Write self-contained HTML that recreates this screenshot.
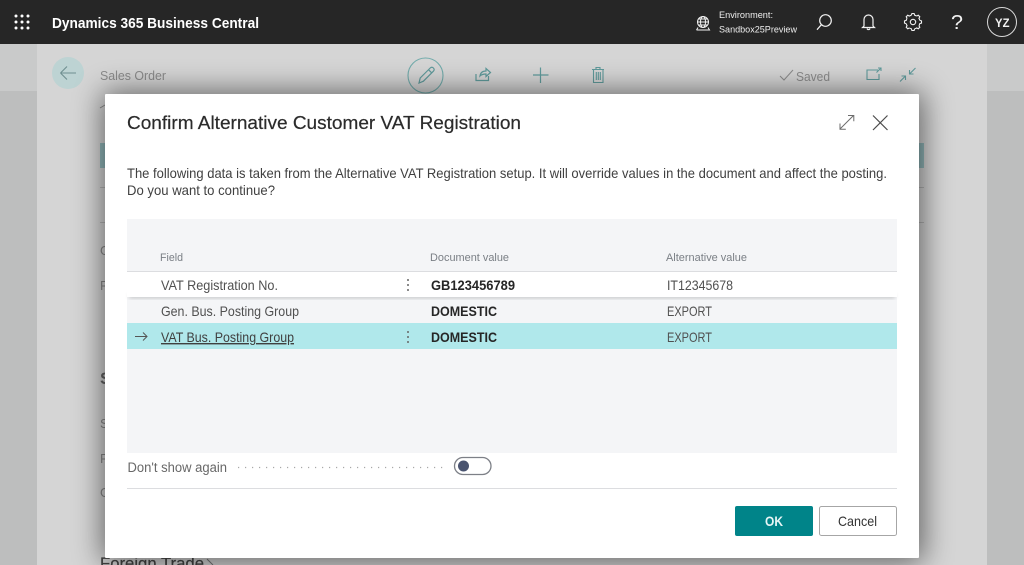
<!DOCTYPE html>
<html lang="en"><head><meta charset="utf-8"><title>Confirm Alternative Customer VAT Registration</title>
<style>
html,body{margin:0;padding:0;width:1024px;height:565px;overflow:hidden;background:#d5d5d5}
svg{display:block;position:absolute;left:0;top:0;filter:blur(.3px)}
text{font-family:"Liberation Sans",sans-serif}
</style></head><body>
<svg width="1024" height="565" viewBox="0 0 1024 565" xmlns="http://www.w3.org/2000/svg">
<defs>
<filter id="sh" x="-15%" y="-20%" width="130%" height="140%"><feGaussianBlur stdDeviation="15"/></filter>
<filter id="rs" x="-5%" y="-50%" width="110%" height="200%"><feGaussianBlur stdDeviation="2"/></filter>
<path id="t" d="M-1.6 -6.8L-1.1 -8.5H1.1L1.6 -6.8A7 7 0 0 1 3.68 -5.94"/>
</defs>
<!-- page background -->
<rect width="1024" height="565" fill="#d5d5d5"/>
<rect x="0" y="44" width="37" height="521" fill="#bdbebe"/>
<rect x="987" y="44" width="37" height="521" fill="#bdbebe"/>
<rect x="0" y="44" width="37" height="47" fill="#c9caca"/>
<rect x="987" y="44" width="37" height="47" fill="#c9caca"/>
<!-- page behind dialog -->
<circle cx="68" cy="73" r="16" fill="#bdd3d3"/>
<path d="M60.5 73H76M60.5 73l6.5-6.500M60.5 73l6.500 6.500" fill="none" stroke="#6f8f90" stroke-width="1.100"/>
<text x="100" y="80" font-size="13" fill="#8b8b8b" textLength="66" lengthAdjust="spacingAndGlyphs">Sales Order</text>
<circle cx="425.500" cy="75.500" r="17.500" fill="none" stroke="#71abab" stroke-width="1.100"/>
<path d="M419 83l1.200-5 10-10c1-1 2.200-1 3.200 0s1 2.200 0 3.200l-10 10zM428.500 69.700l3.500 3.500" fill="none" stroke="#5f9a9b" stroke-width="1.200"/>
<path d="M476 74v6.500h12.500V76M480 76c.5-3.500 3-5 6-5v-2.500l4.500 4-4.500 4V74c-2.500 0-4.500.5-6 2z" fill="none" stroke="#5f9a9b" stroke-width="1.200"/>
<path d="M533 75h15.500M540.500 67.500v15.500" fill="none" stroke="#5f9a9b" stroke-width="1.200"/>
<path d="M592 69.500h12M596 69.500v-2h4v2M593.500 69.500v13h9.500v-13M596.300 72v8M598.300 72v8M600.300 72v8" fill="none" stroke="#5f9a9b" stroke-width="1.100"/>
<path d="M780 76l4 4 9-10" fill="none" stroke="#8b8b8b" stroke-width="1"/>
<text x="796" y="81" font-size="13" fill="#8b8b8b" textLength="34" lengthAdjust="spacingAndGlyphs">Saved</text>
<path d="M878 70h-11v9.500h12V74M876.500 72.500l4-4M878 68h3v3" fill="none" stroke="#5f9a9b" stroke-width="1.100"/>
<path d="M900 81.500l5.500-5.500M901.500 76h4v4M915.500 68l-6 6M909.500 70v4h4" fill="none" stroke="#5f9a9b" stroke-width="1.100"/>
<path d="M100 108l5-3" stroke="#888" fill="none"/>
<rect x="100" y="143" width="824" height="25" fill="#93b9bb"/>
<rect x="100" y="187" width="824" height="1" fill="#b5b5b5"/>
<rect x="100" y="222" width="824" height="1" fill="#b5b5b5"/>
<text x="100" y="255" font-size="13" fill="#888">G</text>
<text x="100" y="290" font-size="13" fill="#888">F</text>
<text x="100" y="384" font-size="17" font-weight="bold" fill="#666">S</text>
<text x="100" y="428" font-size="13" fill="#888">S</text>
<text x="100" y="463" font-size="13" fill="#888">F</text>
<text x="100" y="497" font-size="13" fill="#888">G</text>
<text x="100" y="569" font-size="17" fill="#444" stroke="#444" stroke-width=".2" textLength="104" lengthAdjust="spacingAndGlyphs">Foreign Trade</text>
<path d="M207 559l6 6" stroke="#777" fill="none"/>
<!-- dialog shadow and dialog -->
<rect x="103" y="92" width="820" height="470" fill="#000" opacity=".55" filter="url(#sh)"/>
<rect x="105" y="94" width="814" height="464" rx="1" fill="#fff"/>
<!-- top bar -->
<rect width="1024" height="44" fill="#262626"/>
<g fill="#fff"><circle cx="16" cy="16" r="1.500"/><circle cx="22" cy="16" r="1.500"/><circle cx="28" cy="16" r="1.500"/><circle cx="16" cy="22" r="1.500"/><circle cx="22" cy="22" r="1.500"/><circle cx="28" cy="22" r="1.500"/><circle cx="16" cy="28" r="1.500"/><circle cx="22" cy="28" r="1.500"/><circle cx="28" cy="28" r="1.500"/></g>
<text x="52" y="28" font-size="15" font-weight="bold" fill="#fff" textLength="207" lengthAdjust="spacingAndGlyphs">Dynamics 365 Business Central</text>
<g fill="none" stroke="#f2f2f2" stroke-width="1">
<circle cx="703" cy="22" r="5.500"/><ellipse cx="703" cy="22" rx="2.500" ry="5.500"/><path d="M697.500 22h11M698.500 19h9M698.500 25h9M696.500 30h13l-1.500-2.500M696.500 30l1.500-2.500"/>
<circle cx="825.500" cy="20.500" r="5.800" stroke-width="1.200"/><path d="M821.300 24.800l-4.300 4.900" stroke-width="1.200"/>
<path d="M864 26v-6.500a4.500 4.500 0 0 1 9 0V26l1.500 1.500h-12zM867 28.500a1.600 1.600 0 0 0 3 0" stroke-width="1.200"/>
<circle cx="913" cy="22" r="2.700" stroke-width="1.100"/>
<g transform="translate(913 22)" stroke-width="1.100">
<use href="#t"/><use href="#t" transform="rotate(45)"/><use href="#t" transform="rotate(90)"/><use href="#t" transform="rotate(135)"/><use href="#t" transform="rotate(180)"/><use href="#t" transform="rotate(225)"/><use href="#t" transform="rotate(270)"/><use href="#t" transform="rotate(315)"/>
</g>
<circle cx="1002" cy="22" r="14.500" stroke="#d8d8d8" stroke-width="1"/>
</g>
<text x="719" y="18" font-size="9.500" fill="#eee" textLength="54" lengthAdjust="spacingAndGlyphs">Environment:</text>
<text x="719" y="32.500" font-size="9.500" fill="#eee" textLength="78" lengthAdjust="spacingAndGlyphs">Sandbox25Preview</text>
<text x="951" y="29" font-size="20" fill="#f2f2f2" textLength="12" lengthAdjust="spacingAndGlyphs">?</text>
<text x="995" y="27" font-size="12" font-weight="bold" fill="#f2f2f2" textLength="14.500" lengthAdjust="spacingAndGlyphs">YZ</text>
<!-- dialog content -->
<text x="127" y="129" font-size="18.500" fill="#2b2b2b" stroke="#2b2b2b" stroke-width=".2" textLength="394" lengthAdjust="spacingAndGlyphs">Confirm Alternative Customer VAT Registration</text>
<path d="M840 129l13.500-13.500M848 115.500h5.800v5.800M840 123.500v5.800h5.800" fill="none" stroke="#6c6c6c" stroke-width="1"/>
<path d="M873 115.500l14.500 14.500M887.500 115.500L873 130" fill="none" stroke="#4c4c4c" stroke-width="1.200"/>
<text x="127" y="178" font-size="14" fill="#404040" textLength="760" lengthAdjust="spacingAndGlyphs">The following data is taken from the Alternative VAT Registration setup. It will override values in the document and affect the posting.</text>
<text x="127" y="195" font-size="14" fill="#404040" textLength="148" lengthAdjust="spacingAndGlyphs">Do you want to continue?</text>
<!-- table -->
<rect x="127" y="219" width="770" height="234" fill="#f4f5f7"/>
<text x="160" y="261" font-size="11" fill="#7a7f85" textLength="23" lengthAdjust="spacingAndGlyphs">Field</text>
<text x="430" y="261" font-size="11" fill="#7a7f85" textLength="79" lengthAdjust="spacingAndGlyphs">Document value</text>
<text x="666" y="261" font-size="11" fill="#7a7f85" textLength="81" lengthAdjust="spacingAndGlyphs">Alternative value</text>
<rect x="127" y="271" width="770" height="1" fill="#dcdde0"/>
<rect x="129" y="294" width="766" height="4" fill="#000" opacity=".22" filter="url(#rs)"/>
<rect x="127" y="272" width="770" height="25" fill="#fff"/>
<rect x="127" y="323" width="770" height="26" fill="#b0e8eb"/>
<text x="161" y="290" font-size="14" fill="#505050" textLength="117" lengthAdjust="spacingAndGlyphs">VAT Registration No.</text>
<text x="431" y="290" font-size="14" font-weight="bold" fill="#262626" textLength="84" lengthAdjust="spacingAndGlyphs">GB123456789</text>
<text x="667" y="290" font-size="14" fill="#505050" textLength="66" lengthAdjust="spacingAndGlyphs">IT12345678</text>
<text x="161" y="316" font-size="14" fill="#505050" textLength="138" lengthAdjust="spacingAndGlyphs">Gen. Bus. Posting Group</text>
<text x="431" y="316" font-size="14" font-weight="bold" fill="#262626" textLength="66" lengthAdjust="spacingAndGlyphs">DOMESTIC</text>
<text x="667" y="316" font-size="14" fill="#505050" textLength="45" lengthAdjust="spacingAndGlyphs">EXPORT</text>
<text x="161" y="342" font-size="14" fill="#404040" text-decoration="underline" textLength="133" lengthAdjust="spacingAndGlyphs">VAT Bus. Posting Group</text>
<text x="431" y="342" font-size="14" font-weight="bold" fill="#262626" textLength="66" lengthAdjust="spacingAndGlyphs">DOMESTIC</text>
<text x="667" y="342" font-size="14" fill="#505050" textLength="45" lengthAdjust="spacingAndGlyphs">EXPORT</text>
<path d="M135 336.500h12M143 332.500l4 4-4 4" fill="none" stroke="#555" stroke-width="1"/>
<g fill="#666"><circle cx="408" cy="280" r="1"/><circle cx="408" cy="285" r="1"/><circle cx="408" cy="290" r="1"/><circle cx="408" cy="332" r="1"/><circle cx="408" cy="337" r="1"/><circle cx="408" cy="342" r="1"/></g>
<!-- toggle row -->
<text x="127.500" y="472" font-size="13.500" fill="#686868" textLength="99.500" lengthAdjust="spacingAndGlyphs">Don't show again</text>
<line x1="238" y1="467.500" x2="448" y2="467.500" stroke="#a8a8a8" stroke-width="1.200" stroke-dasharray="1.200 5.800"/>
<rect x="454.500" y="457.500" width="36.500" height="17" rx="8.500" fill="#fff" stroke="#7d8087" stroke-width="1.300"/>
<circle cx="463.500" cy="466" r="5.500" fill="#4a5470"/>
<rect x="127" y="488" width="770" height="1" fill="#dcdde0"/>
<!-- buttons -->
<rect x="735" y="506" width="78" height="30" rx="2" fill="#008489"/>
<text x="765" y="526" font-size="14" font-weight="bold" fill="#e8f6f6" textLength="18" lengthAdjust="spacingAndGlyphs">OK</text>
<rect x="819.500" y="506.500" width="77" height="29" rx="2" fill="#fff" stroke="#a6a6a6"/>
<text x="838" y="526" font-size="14" fill="#333" textLength="39" lengthAdjust="spacingAndGlyphs">Cancel</text>
</svg>
</body></html>
